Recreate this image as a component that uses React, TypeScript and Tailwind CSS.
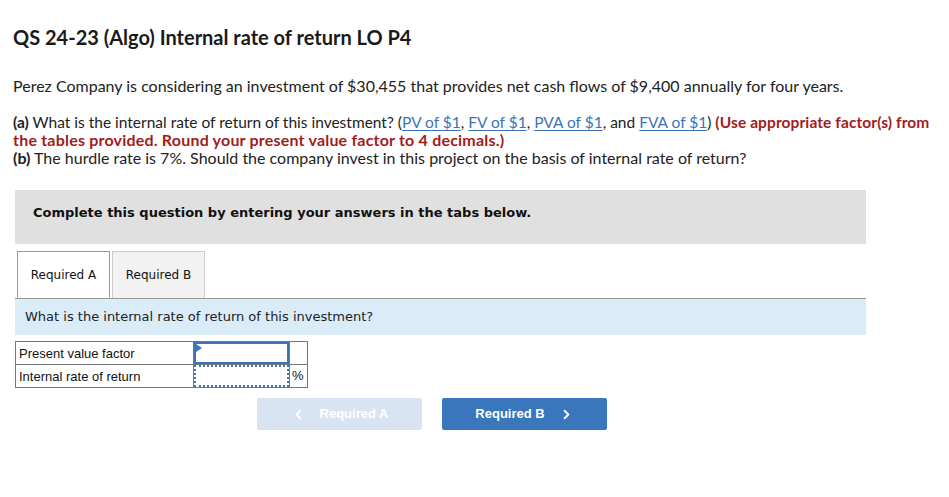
import { ChevronLeft, ChevronRight } from "lucide-react";

function Link({ children }: { children: React.ReactNode }) {
	return <span className="text-[#3b73b9] underline underline-offset-2 decoration-[#3b73b9]">{children}</span>;
}

function App() {
	const body = "font-['Lato','Open_Sans',sans-serif]";
	const verdana = "font-['DejaVu_Sans','Verdana',sans-serif]";
	const arial = "font-['Liberation_Sans','Arial',sans-serif]";

	return (
		<div className={`w-[949px] h-[497px] bg-white text-[#222] ${body} overflow-hidden`}>
			<div className="pl-[13px] pt-[24px]">
				<h1 className="text-[20px] font-bold leading-[26px] text-[#1a1a1a]">
					QS 24-23 (Algo) Internal rate of return LO P4
				</h1>
				<p className="mt-[24px] text-[16px] leading-[24px]">
					Perez Company is considering an investment of $30,455 that provides net cash flows of $9,400 annually for four years.
				</p>
				<div className="mt-[15px] leading-[18px]">
					<p className="text-[15.5px] whitespace-nowrap">
						<b>(a)</b> What is the internal rate of return of this investment? (<Link>PV of $1</Link>, <Link>FV of $1</Link>,{" "}
						<Link>PVA of $1</Link>, and <Link>FVA of $1</Link>){" "}
						<b className="text-[#a31b1b] tracking-[0.1px]">(Use appropriate factor(s) from</b>
						<br />
						<b className="text-[#a31b1b] text-[16px] tracking-[0.2px]">
							the tables provided. Round your present value factor to 4 decimals.)
						</b>
					</p>
					<p className="text-[16px]">
						<b>(b)</b> The hurdle rate is 7%. Should the company invest in this project on the basis of internal rate of return?
					</p>
				</div>
			</div>

			<div className="ml-[15px] w-[851px]">
				<div className={`mt-[23px] h-[54px] bg-[#e0e0e0] pl-[18px] pt-[13px] ${verdana} text-[13px] font-bold text-[#111]`}>
					Complete this question by entering your answers in the tabs below.
				</div>

				<div className={`mt-[7px] flex gap-[2px] pl-[2px] border-b border-[#999] ${verdana} text-[12px] text-[#111]`}>
					<div className="w-[93px] h-[47px] -mb-px bg-white border border-[#999] border-b-white flex items-center justify-center">
						Required A
					</div>
					<div className="w-[93px] h-[47px] bg-[#f2f2f2] border border-[#ccc] border-b-0 flex items-center justify-center">
						Required B
					</div>
				</div>

				<div className={`h-[36px] bg-[#dbecf9] pl-[10px] flex items-center ${verdana} text-[13px] text-[#222]`}>
					What is the internal rate of return of this investment?
				</div>

				<table className={`mt-[6px] border-collapse ${arial} text-[13px] text-[#111]`}>
					<tbody>
						<tr className="h-[23px]">
							<td className="w-[178px] border border-[#777] pl-[3px] leading-[21px]">Present value factor</td>
							<td className="w-[96px] border border-[#777] p-0">
								<div className="relative h-[22px] border-2 border-[#3f73b5]">
									<span className="absolute left-0 top-0 w-0 h-0 border-t-[4px] border-b-[4px] border-l-[6px] border-t-transparent border-b-transparent border-l-[#3f73b5]" />
								</div>
							</td>
							<td className="w-[18px] border border-[#777]"></td>
						</tr>
						<tr className="h-[23px]">
							<td className="border border-[#777] pl-[3px] leading-[21px]">Internal rate of return</td>
							<td className="border border-[#777] p-0">
								<div className="h-[22px] border-2 border-dotted border-[#3f73b5]" />
							</td>
							<td className="border border-[#777] pl-[2px]">%</td>
						</tr>
					</tbody>
				</table>

				<div className={`mt-[10px] flex gap-[20px] ml-[242px] ${arial} text-[13px] font-bold text-white`}>
					<div className="w-[165px] h-[32px] rounded-[2px] bg-[#d8e4f2] flex items-center justify-center gap-[14px]">
						<ChevronLeft size={15} strokeWidth={3} />
						<span>Required A</span>
					</div>
					<div className="w-[165px] h-[32px] rounded-[2px] bg-[#3a76bb] flex items-center justify-center gap-[14px]">
						<span>Required B</span>
						<ChevronRight size={15} strokeWidth={3} />
					</div>
				</div>
			</div>
		</div>
	);
}

export default App;
